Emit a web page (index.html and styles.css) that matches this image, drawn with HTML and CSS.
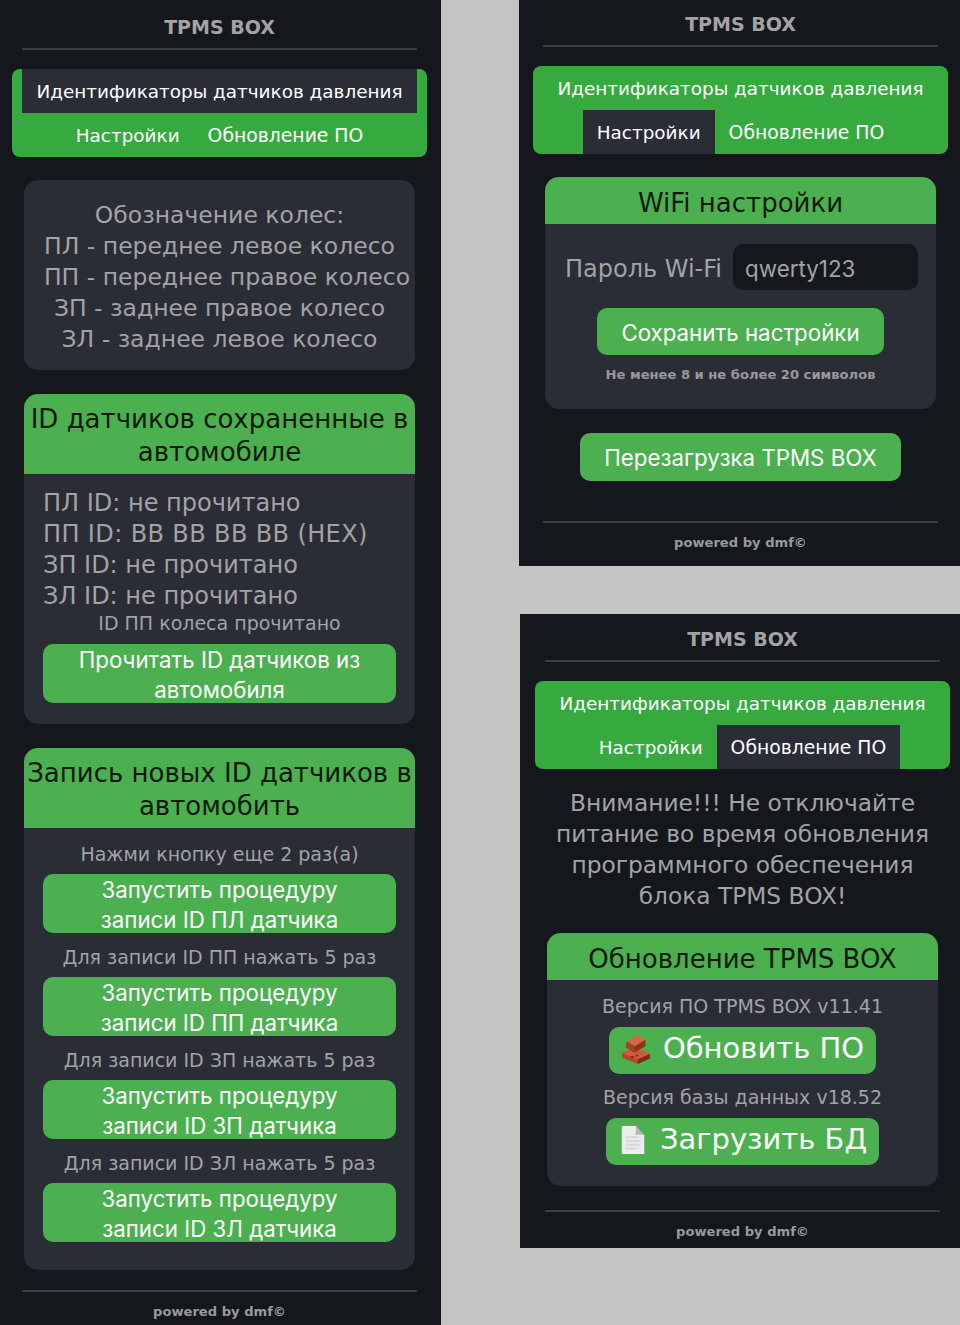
FILE: index.html
```html
<!DOCTYPE html>
<html lang="ru">
<head>
<meta charset="utf-8">
<title>TPMS BOX</title>
<link rel="stylesheet" href="styles.css">
</head>
<body>
<main class="canvas">
  <section class="panel panel-left">
    <h1 class="title">TPMS BOX</h1>
    <hr class="rule">
    <nav class="tabs">
      <a class="tab active">Идентификаторы датчиков давления</a>
      <a class="tab">Настройки</a>
      <a class="tab tab-update">Обновление ПО</a>
    </nav>
    <div class="card card-first legend">
      Обозначение колес:<br>
      ПЛ - переднее левое колесо<br>
      &nbsp;&nbsp;ПП - переднее правое колесо<br>
      ЗП - заднее правое колесо<br>
      ЗЛ - заднее левое колесо
    </div>
    <div class="card">
      <h2 class="card-head">ID датчиков сохраненные в<br>автомобиле</h2>
      <div class="card-body">
        <div class="id-list">
          ПЛ ID: не прочитано<br>
          <span class="hex">ПП ID: BB BB BB BB (HEX)</span><br>
          ЗП ID: не прочитано<br>
          ЗЛ ID: не прочитано
        </div>
        <p class="hint hint-tight">ID ПП колеса прочитано</p>
        <button class="btn btn-wide">Прочитать ID датчиков из автомобиля</button>
      </div>
    </div>
    <div class="card">
      <h2 class="card-head">Запись новых ID датчиков в<br>автомобить</h2>
      <div class="card-body write-body">
        <p class="hint">Нажми кнопку еще 2 раз(а)</p>
        <button class="btn btn-wide">Запустить процедуру<br>записи ID ПЛ датчика</button>
        <p class="hint">Для записи ID ПП нажать 5 раз</p>
        <button class="btn btn-wide">Запустить процедуру<br>записи ID ПП датчика</button>
        <p class="hint">Для записи ID ЗП нажать 5 раз</p>
        <button class="btn btn-wide">Запустить процедуру<br>записи ID ЗП датчика</button>
        <p class="hint">Для записи ID ЗЛ нажать 5 раз</p>
        <button class="btn btn-wide">Запустить процедуру<br>записи ID ЗЛ датчика</button>
      </div>
    </div>
    <hr class="rule rule-foot">
    <footer class="foot">powered by dmf©</footer>
  </section>

  <section class="panel panel-settings">
    <h1 class="title">TPMS BOX</h1>
    <hr class="rule">
    <nav class="tabs">
      <a class="tab">Идентификаторы датчиков давления</a>
      <a class="tab active">Настройки</a>
      <a class="tab tab-update">Обновление ПО</a>
    </nav>
    <div class="card card-first">
      <h2 class="card-head single">WiFi настройки</h2>
      <div class="card-body wifi-body">
        <div class="field">
          <label class="field-label">Пароль Wi-Fi</label>
          <span class="input">qwerty123</span>
        </div>
        <button class="btn btn-pill">Сохранить настройки</button>
        <p class="note">Не менее 8 и не более 20 символов</p>
      </div>
    </div>
    <button class="btn btn-pill btn-reboot">Перезагрузка TPMS BOX</button>
    <hr class="rule rule-foot-settings">
    <footer class="foot">powered by dmf©</footer>
  </section>

  <section class="panel panel-update">
    <h1 class="title">TPMS BOX</h1>
    <hr class="rule">
    <nav class="tabs">
      <a class="tab">Идентификаторы датчиков давления</a>
      <a class="tab">Настройки</a>
      <a class="tab tab-update active">Обновление ПО</a>
    </nav>
    <p class="warning">Внимание!!! Не отключайте<br>питание во время обновления<br>программного обеспечения<br>блока TPMS BOX!</p>
    <div class="card card-update">
      <h2 class="card-head single">Обновление TPMS BOX</h2>
      <div class="card-body update-body">
        <p class="hint">Версия ПО TPMS BOX v11.41</p>
        <button class="btn btn-large">
          <svg class="icon" viewBox="0 0 32 32" aria-hidden="true">
            <path d="M1 20 14 15l17 6-13 6z" fill="#cf5a38"/>
            <path d="M1 20v5l17 7v-5z" fill="#b8442a"/>
            <path d="M18 27v5l13-6v-5z" fill="#7f2a17"/>
            <path d="M6 8 18 1l8 5-11 7z" fill="#d8654a"/>
            <path d="M6 8l-1 6 9 6 1-7z" fill="#a83d22"/>
            <path d="M15 13l-1 7 12-7V6z" fill="#8f3219"/>
            <ellipse cx="12" cy="24.500" rx="1.800" ry="1" fill="#7d2a16"/>
            <ellipse cx="17" cy="23" rx="1.800" ry="1" fill="#7d2a16"/>
          </svg>
          Обновить ПО
        </button>
        <p class="hint">Версия базы данных v18.52</p>
        <button class="btn btn-large">
          <svg class="icon" viewBox="0 0 32 32" aria-hidden="true">
            <path d="M4 1h15l9 10v20H4z" fill="#ececec"/>
            <path d="M19 1c1 5 0 9-1 10 3-1 7-1 10 0z" fill="#b4b4b4"/>
            <path d="M8 13h14M8 17h16M8 21h16M8 25h12" stroke="#d6d6d6" stroke-width="2"/>
          </svg>
          Загрузить БД
        </button>
      </div>
    </div>
    <hr class="rule rule-foot-update">
    <footer class="foot">powered by dmf©</footer>
  </section>
</main>
</body>
</html>
```

FILE: styles.css
```css
* { box-sizing: border-box; }
html, body { margin: 0; height: 1325px; overflow: hidden; }
body { background: #c4c4c4; font-family: "DejaVu Sans", sans-serif; color: #a3a3a3; }
.canvas { position: relative; width: 960px; height: 1325px; overflow: hidden; }

.panel { position: absolute; width: 443px; background: #14171c; padding-top: 15px; }
.panel-left { left: -2px; top: 0; height: 1325px; }
.panel-settings { left: 519px; top: -3px; height: 569px; }
.panel-update { left: 520px; top: 614px; width: 444px; height: 634px; padding-top: 13px; padding-left: 1px; }

.title { margin: 0; height: 24px; font-size: 19px; line-height: 24px; font-weight: 700; text-align: center; color: #a3a3a3; }
.rule { height: 2px; margin: 9px 24px 0; border: 0; background: #383c44; }
.rule-foot { margin-top: 20px; }
.rule-foot-settings { margin-top: 40px; }
.rule-foot-update { margin-top: 24px; }
.foot { margin-top: 11px; font-size: 13.1px; line-height: 18px; font-weight: 700; text-align: center; color: #9a9a9a; }

.tabs { display: flex; flex-wrap: wrap; justify-content: center; width: 415px; margin: 19px 14px 0; background: #37aa3f; border-radius: 8px; overflow: hidden; }
.tab { height: 44px; padding: 0 14px; font-size: 18.4px; line-height: 45.5px; color: #fff; white-space: nowrap; }
.tab-update { font-size: 18.8px; }
.tab.active { background: #2a2c36; }

.card { width: 391px; margin: 24px 26px 0; background: #2a2c36; border-radius: 14px; overflow: hidden; }
.card-first { margin-top: 23px; }
.card-update { margin-top: 22px; }
.legend { padding: 19.5px 0 15.5px; font-size: 23.5px; line-height: 31px; text-align: center; white-space: nowrap; }
.card-head { margin: 0; padding: 9px 0 5px; background: #4caf50; color: #101a0c; font-size: 26px; line-height: 33px; font-weight: 400; text-align: center; white-space: nowrap; }
.card-head.single { padding: 10px 0 4px; }
.card-body { padding: 14px 19px 21px; text-align: center; }
.id-list { font-size: 24px; line-height: 31px; text-align: left; }
.hex { letter-spacing: 0.38px; }
.hint { margin: 0; font-size: 19px; line-height: 24px; text-align: center; }
.hint-tight { margin: -1px 0 9px; }

.btn { display: block; margin: 0 auto; border: 0; border-radius: 10px; background: #4caf50; color: #fff; font-family: Inter, "Liberation Sans", sans-serif; font-size: 22.3px; line-height: 29.5px; text-align: center; }
.btn-wide { width: 353px; height: 59px; padding: 1px 20px 0; }
.write-body { padding-top: 13px; padding-bottom: 28px; }
.write-body .hint { padding: 13px 0 9px; line-height: 22px; }
.write-body .hint:first-child { padding-top: 2px; padding-bottom: 9px; }
.btn-pill { height: 47px; padding: 2px 24px 0; white-space: nowrap; }
.btn-reboot { height: 48px; margin-top: 24px; padding-top: 2px; }
.btn-large { display: flex; align-items: center; justify-content: center; gap: 12px; width: fit-content; height: 47px; padding: 0 12px 4px; font-family: "DejaVu Sans", sans-serif; font-size: 29px; line-height: 43px; white-space: nowrap; }
.icon { width: 30px; height: 30px; flex: none; }

.wifi-body { padding: 20px 18px 24px; }
.field { display: flex; align-items: center; justify-content: flex-end; gap: 11px; font-size: 24px; }
.field-label { padding-top: 3px; }
.input { width: 185px; height: 46px; padding: 0 12px; border-radius: 10px; background: #14171c; font-family: Inter, "Liberation Sans", sans-serif; font-size: 22.4px; line-height: 49px; text-align: left; }
.wifi-body .btn { margin-top: 18px; }
.note { margin: 10px 0 0; font-size: 13.1px; line-height: 20px; font-weight: 700; color: #9a9a9a; text-align: center; }

.warning { margin: 18px 0 0; font-size: 23.3px; line-height: 31px; text-align: center; white-space: nowrap; }
.update-body { padding: 14px 0 21px; }
.update-body .btn { margin-top: 9px; margin-bottom: 11px; }
.update-body .btn:last-child { margin-bottom: 0; }
```
